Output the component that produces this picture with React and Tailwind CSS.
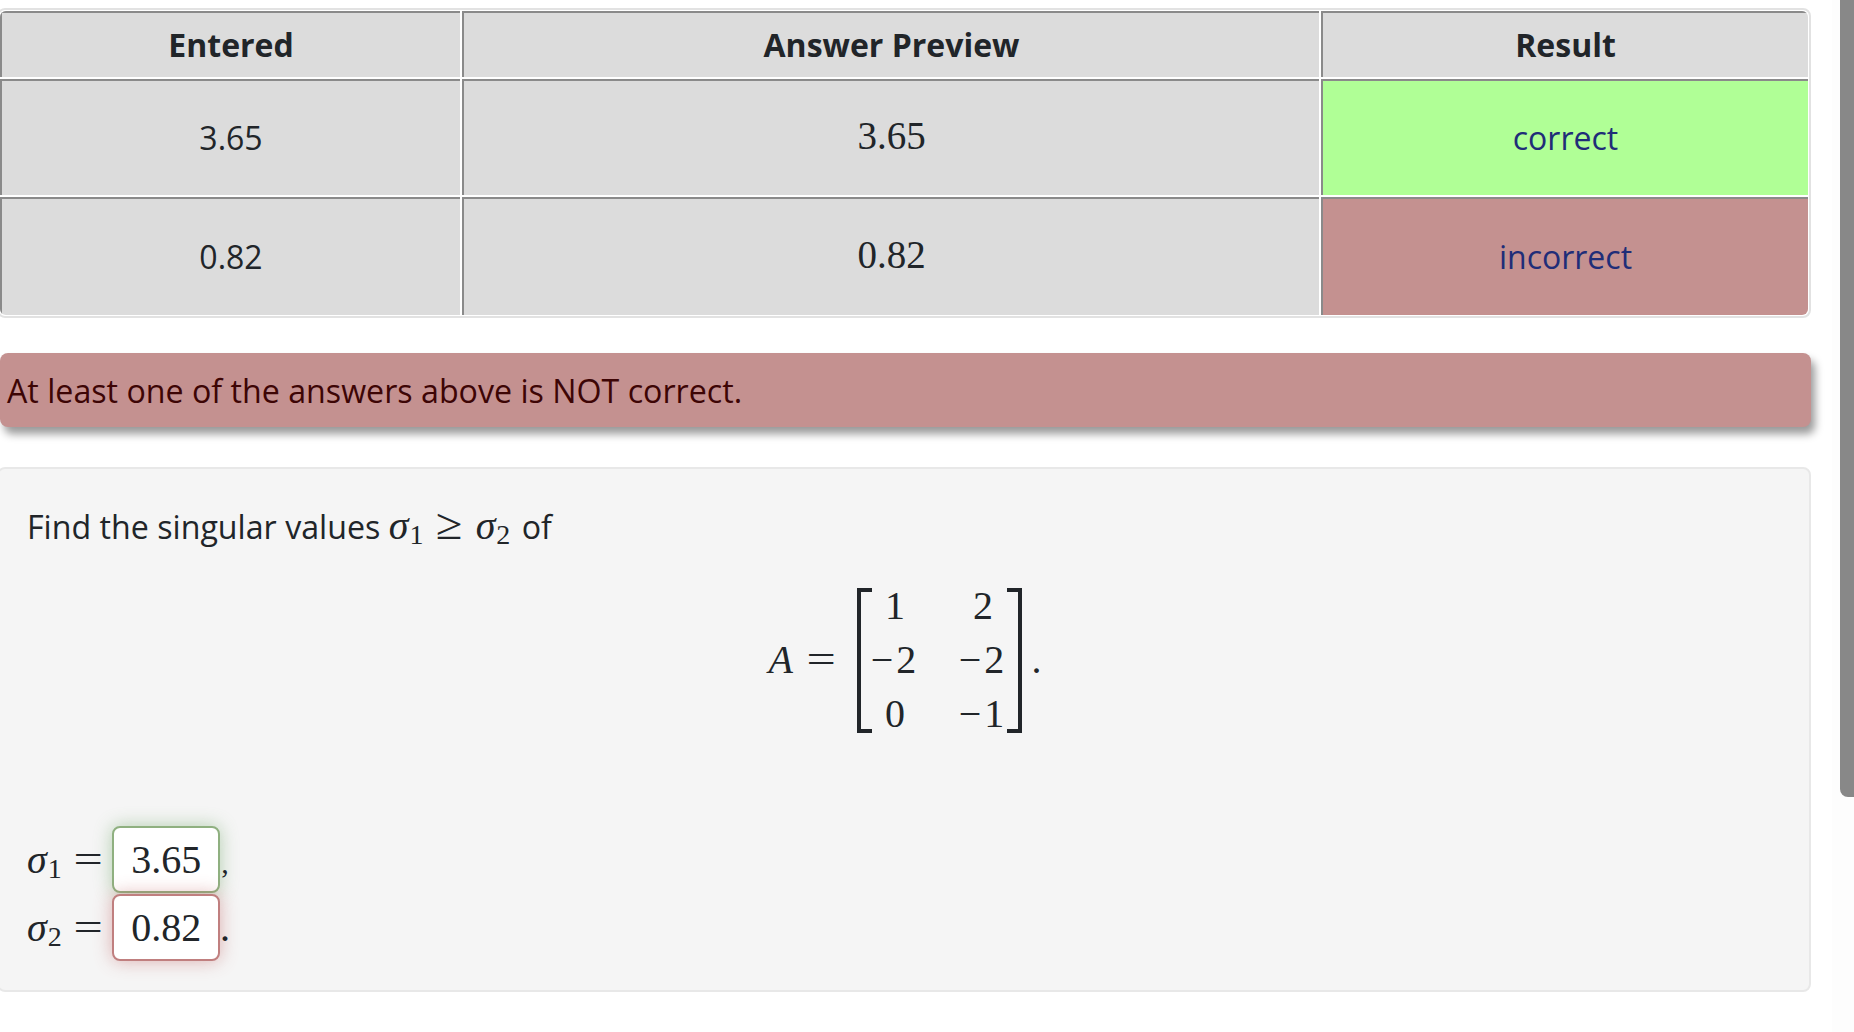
const bodyFont = "font-['Open_Sans','Noto_Sans',sans-serif]";
const mathFont = "font-['Liberation_Serif',serif]";

const Cell = ({ children, className = 'bg-[#dcdcdc] text-[#212529]' }) => (
  <div className={`flex items-center justify-center border-t-2 border-l-2 border-t-[#8a8a8a] border-l-[#8a8a8a] text-[32px] ${className}`}>
    {children}
  </div>
);

const Preview = ({ value }) => (
  <Cell>
    <span className={`${mathFont} -mt-[3px] text-[39px]`}>{value}</span>
  </Cell>
);

const Sigma = ({ n }) => (
  <span className={`${mathFont} whitespace-nowrap text-[40px]`}>
    <i>σ</i>
    <span className="ml-px align-[-5px] text-[28px]">{n}</span>
  </span>
);

const Equals = ({ className = '' }) => (
  <span className={`inline-block scale-x-[1.3] text-[40px] ${className}`}>=</span>
);

const Bracket = ({ side }) => (
  <span className={`block h-[145px] w-[15px] border-y-[4px] border-[#212529] ${side}`} />
);

const AnswerBox = ({ value, tone }) => (
  <span className={`ml-[13px] inline-flex h-[67px] w-[108px] items-center justify-center rounded-lg border-2 bg-white text-[40px] ${tone}`}>
    {value}
  </span>
);

export default function App() {
  return (
    <div className={`${bodyFont} h-[1032px] overflow-hidden bg-white`}>
      <div className="flex">
        <div className="w-[1811px] shrink-0 pt-[8px]">
          <div className="-ml-[3px] rounded-lg border-2 border-[#e2e2e2] bg-white p-px">
            <div className="grid grid-cols-[460px_857px_1fr] grid-rows-[66px_116px_118px] gap-[2px] overflow-hidden rounded-md">
              <Cell className="bg-[#dcdcdc] font-bold text-[#212529]">Entered</Cell>
              <Cell className="bg-[#dcdcdc] font-bold text-[#212529]">Answer Preview</Cell>
              <Cell className="bg-[#dcdcdc] font-bold text-[#212529]">Result</Cell>
              <Cell>3.65</Cell>
              <Preview value="3.65" />
              <Cell className="bg-[#b0ff96] text-[#1f2d78]">correct</Cell>
              <Cell>0.82</Cell>
              <Preview value="0.82" />
              <Cell className="bg-[#c49190] text-[#1f2d78]">incorrect</Cell>
            </div>
          </div>

          <div className="mt-[35px] flex h-[74px] items-center rounded-lg bg-[#c49190] pl-[7px] pt-[3px] text-[32.2px] text-[#3d0505] shadow-[4px_7px_8px_rgba(0,0,0,0.4)]">
            At least one of the answers above is NOT correct.
          </div>

          <div className="-ml-[3px] mt-[40px] h-[525px] rounded-lg border-2 border-[#e8e8e8] bg-[#f5f5f5] pl-[28px] pt-[23px] text-[32.2px] text-[#212529]">
            <p className="flex h-[50px] items-baseline whitespace-pre">
              {'Find the singular values '}
              <Sigma n={1} />
              <span className={`${mathFont} mx-[14px] inline-block scale-x-110 text-[44px]`}>≥</span>
              <Sigma n={2} />
              <span className="ml-[3px]">{' of'}</span>
            </p>

            <div className={`${mathFont} mt-[43px] flex h-[150px] items-center justify-center pr-[26px] text-[40px]`}>
              <i>A</i>
              <Equals className="ml-[17px]" />
              <div className="ml-[24px] flex items-center">
                <Bracket side="border-l-[4px]" />
                <div className="grid grid-cols-[47px_47px] grid-rows-[54px_54px_54px] items-center justify-items-center gap-x-[41px] text-[40px]">
                  <span>1</span>
                  <span>2</span>
                  <span className="tracking-[3px]">−2</span>
                  <span className="tracking-[3px]">−2</span>
                  <span>0</span>
                  <span className="tracking-[3px]">−1</span>
                </div>
                <Bracket side="border-r-[4px]" />
              </div>
              <span className="ml-[10px]">.</span>
            </div>

            <div className={`${mathFont} mt-[91px] text-[40px] leading-none`}>
              <div className="flex items-baseline">
                <Sigma n={1} />
                <Equals className="ml-[15px]" />
                <AnswerBox value="3.65" tone="border-[#8fb080] shadow-[0_0_18px_rgba(100,160,90,0.45)]" />
                <span className="ml-px text-[30px]">,</span>
              </div>
              <div className="mt-px flex items-baseline">
                <Sigma n={2} />
                <Equals className="ml-[15px]" />
                <AnswerBox value="0.82" tone="border-[#c07f7f] shadow-[0_0_18px_rgba(190,90,90,0.45)]" />
                <span className="ml-px text-[30px] font-bold">.</span>
              </div>
            </div>
          </div>
        </div>
        <div className="ml-[21px] flex h-[1032px] w-[22px] justify-end bg-[#fdfdfd]">
          <div className="h-[797px] w-[14px] rounded-bl-lg bg-[#888888]" />
        </div>
      </div>
    </div>
  );
}
